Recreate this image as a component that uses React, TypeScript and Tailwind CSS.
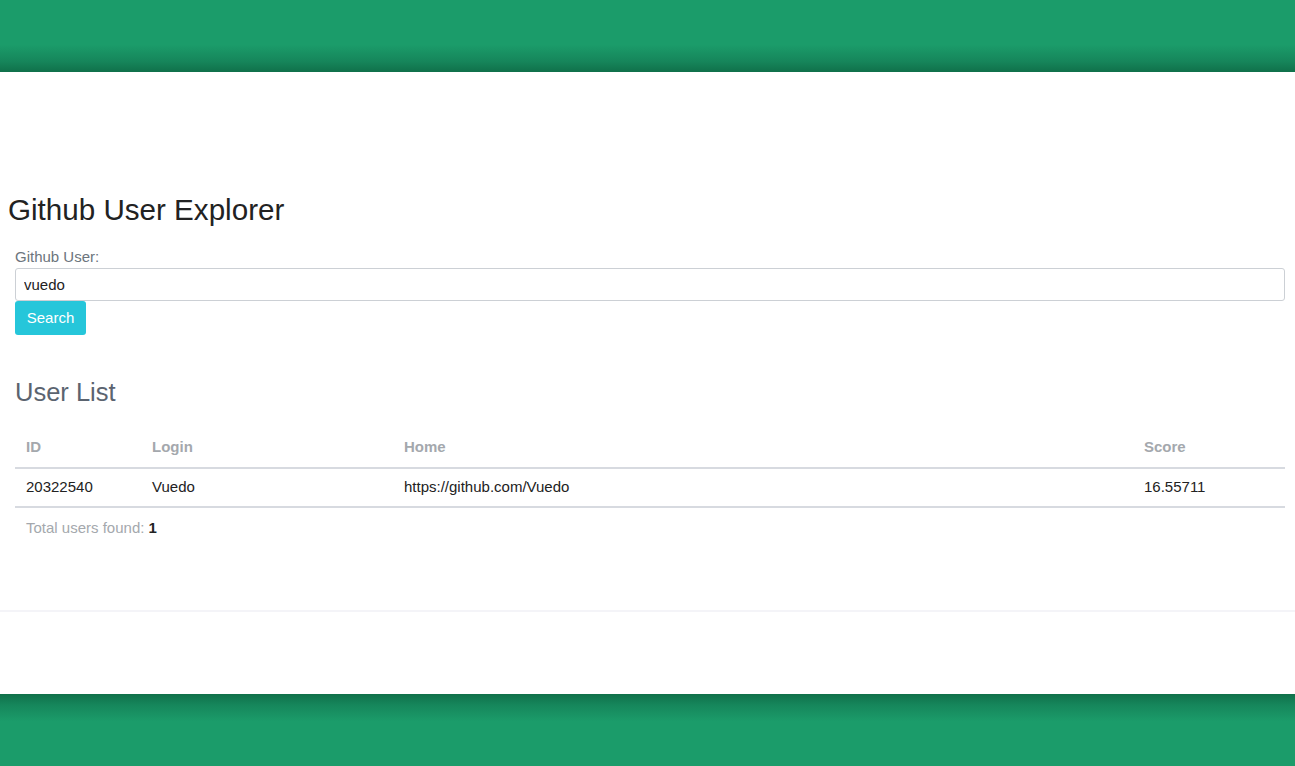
import React from 'react'

const users = [
    { id: 20322540, login: 'Vuedo', home: 'https://github.com/Vuedo', score: '16.55711' },
]

export default function App() {
    return (
        <div className="w-full min-h-[766px] bg-white font-['Liberation_Sans',Arial,sans-serif] text-[#222]">
            {/* top bar */}
            <div className="h-[72px] bg-[linear-gradient(to_bottom,#1b9c6a_0%,#1b9c6a_62%,#16865b_85%,#10704a_100%)]" />

            <main className="h-[622px] flex flex-col">
                <div className="pt-[121px] h-[538px]">
                    <h2 className="pl-2 text-[29.6px] leading-[33px] text-[#222]">Github User Explorer</h2>

                    <div className="pl-[15px] pr-[10px] mt-[21px]">
                        <label className="block h-5 text-[15px] leading-5 text-[#6c757d]">Github User:</label>
                        <input
                            className="mt-px block w-full h-[33px] border border-[#ccd0d5] rounded-[3px] px-2 text-[15px] text-[#222] outline-none"
                            defaultValue="vuedo"
                        />
                        <button className="block w-[71px] h-[34px] bg-[#26c6da] text-white text-[15px] rounded-[3px]">
                            Search
                        </button>

                        <h3 className="mt-[43px] text-[25.5px] leading-[28px] text-[#5b6470]">User List</h3>

                        <table className="mt-[22px] w-full table-fixed border-collapse text-[15px]">
                            <colgroup>
                                <col className="w-[126px]" />
                                <col className="w-[252px]" />
                                <col className="w-[740px]" />
                                <col />
                            </colgroup>
                            <thead>
                                <tr className="h-[40px] border-b-2 border-[#d7dae0] text-left text-[#a4a8ad]">
                                    <th className="pl-[11px] font-bold">ID</th>
                                    <th className="pl-[11px] font-bold">Login</th>
                                    <th className="pl-[11px] font-bold">Home</th>
                                    <th className="pl-[11px] font-bold">Score</th>
                                </tr>
                            </thead>
                            <tbody>
                                {users.map((u) => (
                                    <tr key={u.id} className="h-[39px] border-b-2 border-[#d7dae0] text-[#222]">
                                        <td className="pl-[11px]">{u.id}</td>
                                        <td className="pl-[11px]">{u.login}</td>
                                        <td className="pl-[11px]">{u.home}</td>
                                        <td className="pl-[11px]">{u.score}</td>
                                    </tr>
                                ))}
                            </tbody>
                        </table>

                        <p className="mt-[10px] pl-[11px] text-[15px] leading-5 text-[#a4a8ad]">
                            Total users found: <b className="text-[#222]">{users.length}</b>
                        </p>
                    </div>
                </div>

                <div className="mt-auto h-[84px] border-t-2 border-[#f4f4f8]" />
            </main>

            {/* bottom bar */}
            <div className="h-[72px] bg-[linear-gradient(to_top,#1b9c6a_0%,#1b9c6a_62%,#16865b_85%,#10704a_100%)]" />
        </div>
    )
}
